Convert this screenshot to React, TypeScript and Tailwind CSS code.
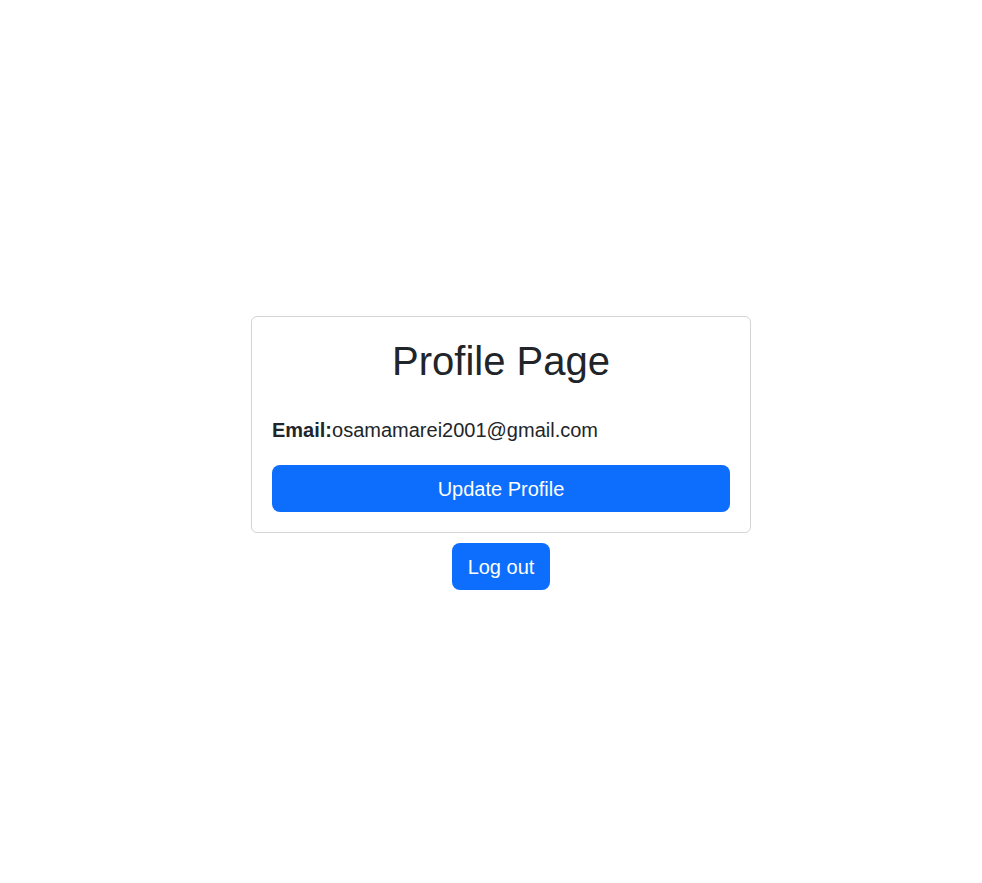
export default function App() {
  return (
    <div
      className="min-h-screen w-full bg-white text-[#212529] flex flex-col items-center pt-[316px] pl-[20px]"
      style={{ fontFamily: '"Liberation Sans", Arial, sans-serif' }}
    >
      <div className="w-[500px] border border-[#d3d4d5] rounded-[6px] p-5 bg-white">
        <h2 className="text-center text-[40px] leading-[48px] font-normal mb-[30px]">Profile Page</h2>
        <div className="text-[20px] leading-[30px] mb-5">
          <strong className="font-bold">Email:</strong>osamamarei2001@gmail.com
        </div>
        <button className="w-full h-[47px] rounded-[8px] bg-[#0d6efd] text-white text-[20px] leading-[30px]">
          Update Profile
        </button>
      </div>
      <div className="w-[500px] text-center mt-[10px]">
        <button className="h-[47px] px-4 rounded-[8px] bg-[#0d6efd] text-white text-[20px] leading-[30px]">
          Log out
        </button>
      </div>
    </div>
  );
}
